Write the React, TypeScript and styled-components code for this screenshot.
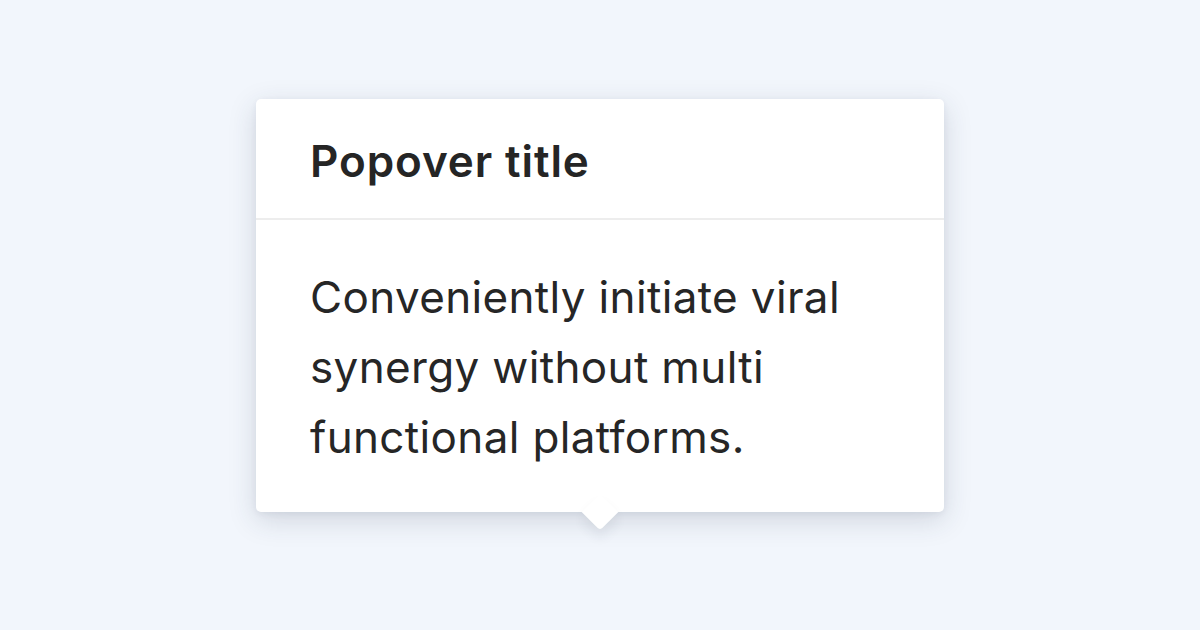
import React from 'react';
import styled, { createGlobalStyle } from 'styled-components';

const GlobalStyle = createGlobalStyle`
  html, body {
    margin: 0;
    padding: 0;
    background: #f2f6fc;
  }
  * {
    box-sizing: border-box;
  }
`;

const Page = styled.div`
  width: 1200px;
  height: 630px;
  background: #f2f6fc;
  display: flex;
  justify-content: center;
  padding-top: 99px;
  font-family: Inter, 'Noto Sans', sans-serif;
`;

const Popover = styled.div`
  position: relative;
  width: 688px;
  height: 413px;
  background: #ffffff;
  border-radius: 5px;
  box-shadow: 0 8px 28px rgba(40, 55, 80, 0.17), 0 2px 6px rgba(40, 55, 80, 0.06);
  display: flex;
  flex-direction: column;

  &::after {
    content: '';
    position: absolute;
    left: 50%;
    bottom: -13px;
    width: 26px;
    height: 26px;
    margin-left: -13px;
    background: #ffffff;
    transform: rotate(45deg);
    border-bottom-right-radius: 4px;
    box-shadow: 6px 6px 12px rgba(40, 55, 80, 0.08);
  }
`;

const Header = styled.div`
  height: 121px;
  padding: 0 54px;
  display: flex;
  align-items: center;
  border-bottom: 2px solid #ededed;
`;

const Title = styled.h3`
  margin: 0;
  margin-top: 4px;
  font-size: 44px;
  font-weight: 600;
  color: #252525;
  letter-spacing: 0.9px;
`;

const Body = styled.div`
  position: relative;
  z-index: 1;
  padding: 42px 54px 0;
`;

const Text = styled.p`
  margin: 0;
  font-size: 44px;
  line-height: 70px;
  font-weight: 400;
  color: #262626;
  letter-spacing: 0.35px;
`;

export default function App() {
  return (
    <>
      <GlobalStyle />
      <Page>
        <Popover>
          <Header>
            <Title>Popover title</Title>
          </Header>
          <Body>
            <Text>
              Conveniently initiate viral synergy without multi functional platforms.
            </Text>
          </Body>
        </Popover>
      </Page>
    </>
  );
}
